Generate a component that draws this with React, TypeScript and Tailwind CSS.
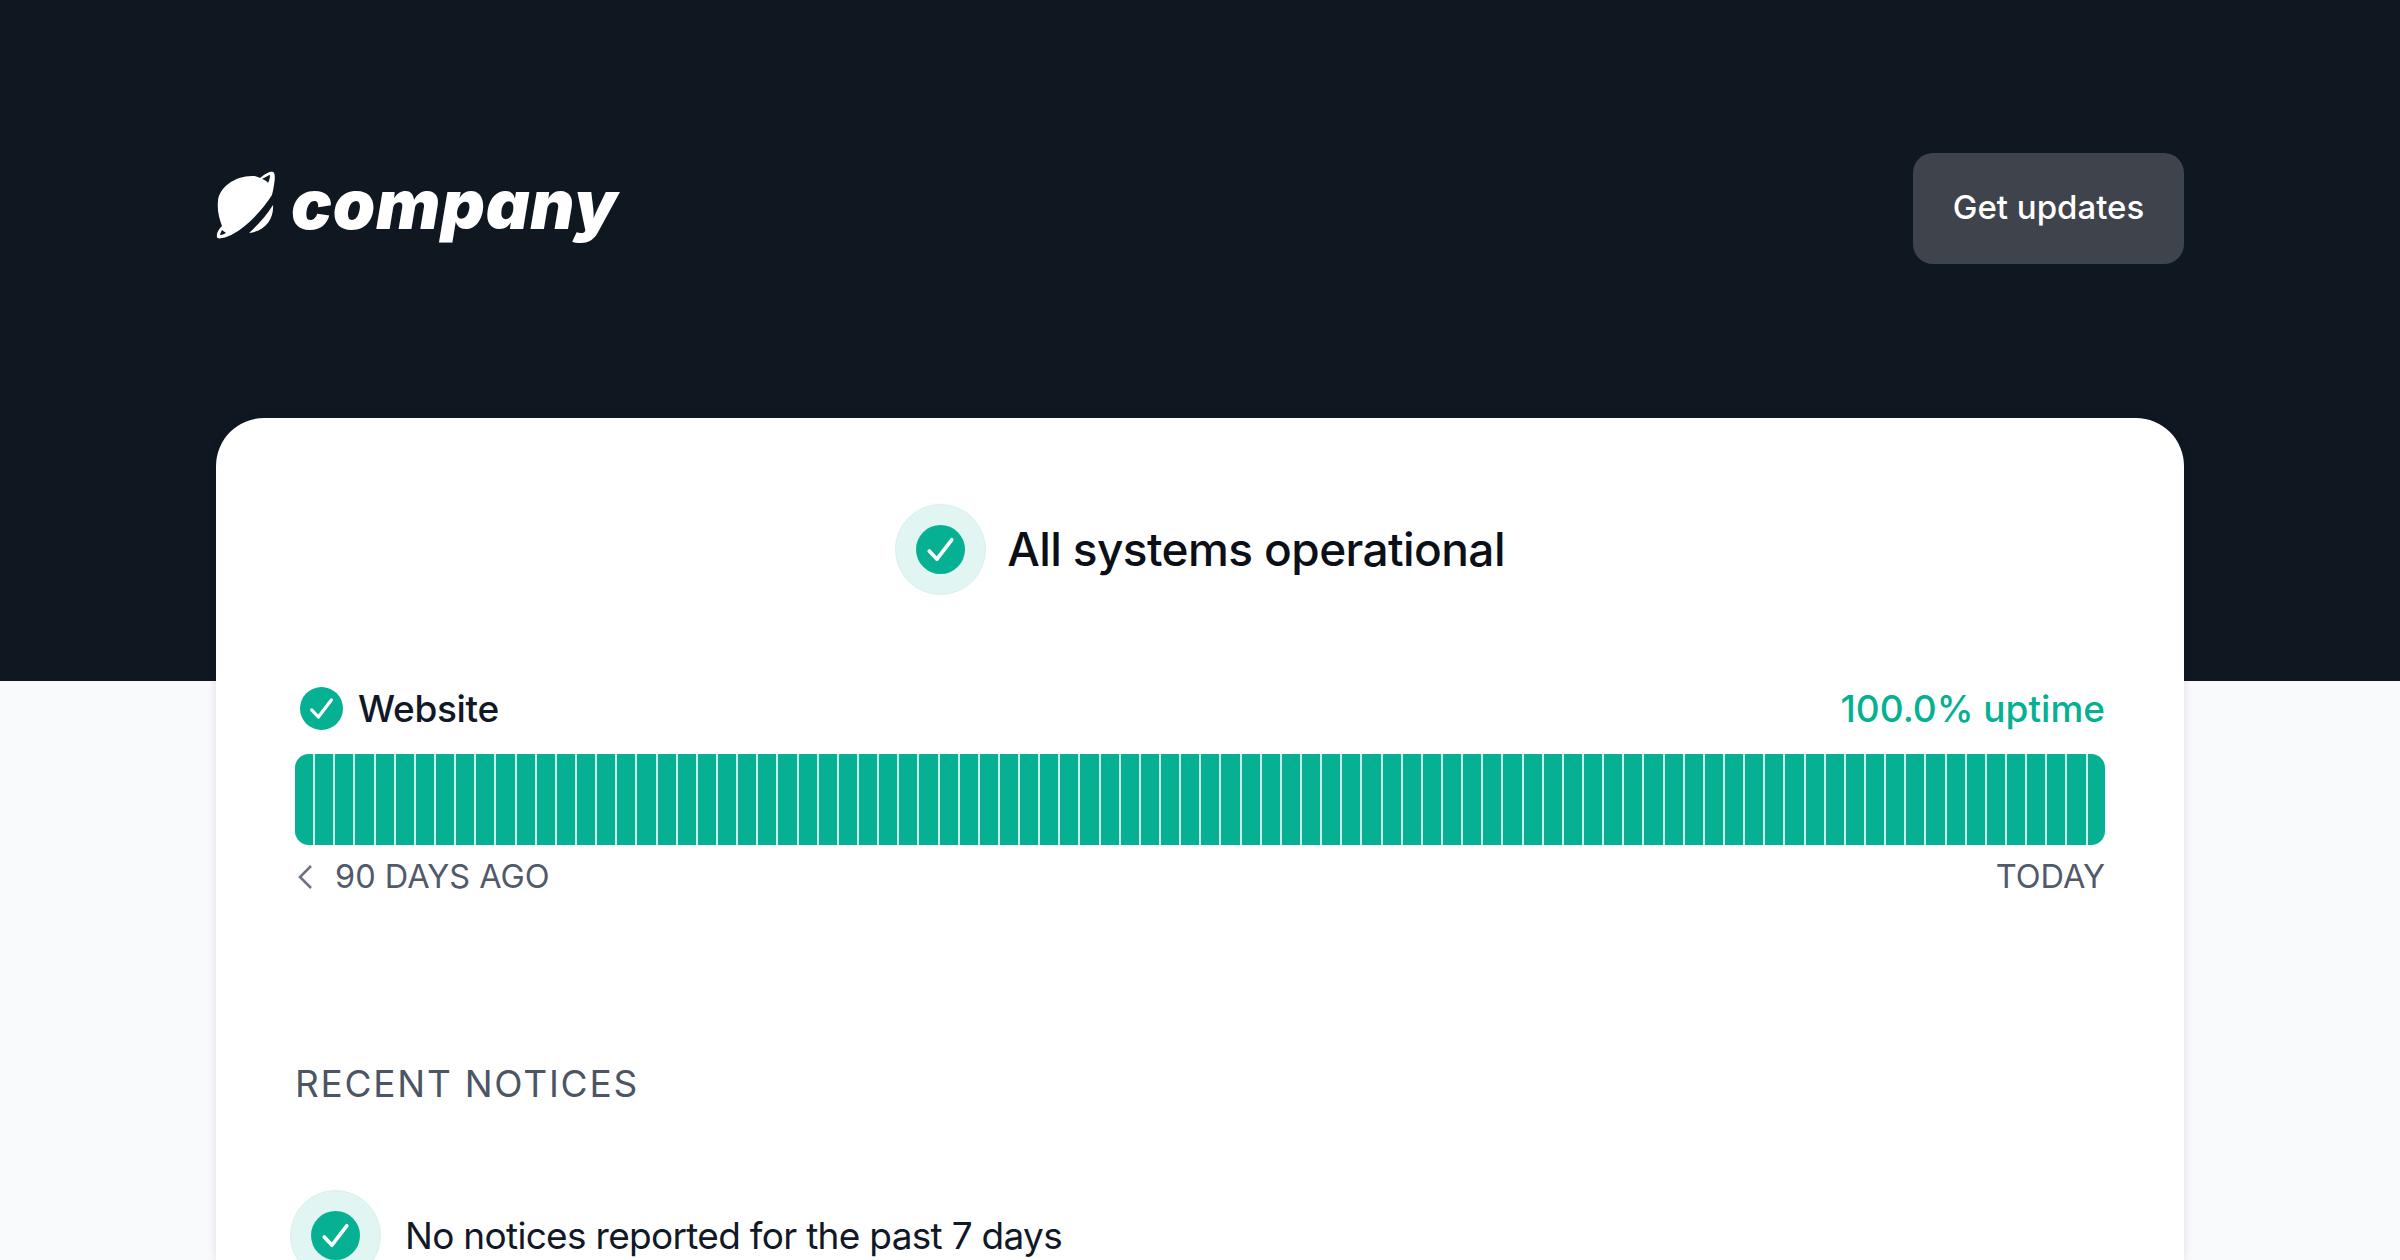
const days = Array.from({ length: 90 }, (_, i) => i);

function Check({ className }: { className: string }) {
  return (
    <svg viewBox="0 0 48 48" className={className}>
      <circle cx="24" cy="24" r="24" fill="#05b192" />
      <path d="M13 25.5l7.5 8L35 14.5" fill="none" stroke="#fff" strokeWidth="3.6" strokeLinecap="round" strokeLinejoin="round" />
    </svg>
  );
}

function Logo() {
  return (
    <div className="flex items-center gap-[15px] mt-[-8px]">
      <svg viewBox="0 0 60 70" className="w-[60px] h-[70px]">
        <path
          fillRule="evenodd"
          d="M44 8C49 4 54 1 57 2c3 1 2 10-1 23C48 38 32 56 17 64c-7 4-16 6-16 3 -1-4 2-8 5-11C3 48 1 40 2 31 3 17 20 5 38 6c2 0 4 1 6 2zM46 9c4-2 7-4 8-4 0 3-1 6-2 8-1-2-3-3-6-4zM6 60c-1 2-2 4-2 5 2 0 4-1 6-2-1-1-3-2-4-3z"
          fill="#fff"
        />
        <path d="M57 35c1 13-7 26-24 28 9-8 17-17 24-28z" fill="#fff" />
      </svg>
      <span className="font-['Inter',sans-serif] font-black italic text-[68px] leading-none tracking-[0.8px] text-white mt-[-2px]">company</span>
    </div>
  );
}

export default function App() {
  return (
    <div className="h-[1260px] overflow-hidden bg-[#f9fafc] font-['Inter',sans-serif]">
      <header className="h-[681px] bg-[#0f1720] px-[216px] pt-[153px]">
        <div className="flex items-center justify-between">
          <Logo />
          <button className="w-[271px] h-[111px] pb-[2px] rounded-[20px] bg-[#3f434b] text-white text-[33px] font-medium">Get updates</button>
        </div>
      </header>

      <main className="relative mx-[216px] mt-[-263px] bg-white rounded-t-[48px] px-[79px] pt-[86px] h-[842px] shadow-[0_0_10px_rgba(17,24,39,0.12)]">
        <div className="flex items-center justify-center gap-[21px]">
          <div className="w-[91px] h-[91px] rounded-full bg-[#e1f5f2] border border-[#d8f1ed] flex items-center justify-center">
            <Check className="w-[49px] h-[49px]" />
          </div>
          <h1 className="text-[46px] font-medium tracking-[-0.6px] text-[#0b0f17]">All systems operational</h1>
        </div>

        <div className="mt-[86px] flex items-center justify-between">
          <div className="flex items-center gap-[15px] pl-[5px]">
            <Check className="w-[43px] h-[43px]" />
            <span className="text-[37px] font-medium tracking-[-0.3px] text-[#111827]">Website</span>
          </div>
          <span className="text-[37px] font-medium text-[#05b192]">100.0% uptime</span>
        </div>

        <div className="mt-[17px] flex h-[91px] rounded-[14px] overflow-hidden gap-[2px] bg-[#cdeee8]">
          {days.map((d) => (
            <div key={d} className="flex-1 bg-[#05b192]" />
          ))}
        </div>

        <div className="mt-[8px] flex items-center justify-between text-[32.5px] text-[#515a6b]">
          <div className="flex items-center gap-[22px] pl-[2px]">
            <svg viewBox="0 0 16 26" className="w-[16px] h-[26px]">
              <path d="M14 2L3 13l11 11" fill="none" stroke="#6b7280" strokeWidth="2.6" />
            </svg>
            <span>90 DAYS AGO</span>
          </div>
          <span>TODAY</span>
        </div>

        <h2 className="mt-[155px] text-[37px] tracking-[1.75px] text-[#4b5563]">RECENT NOTICES</h2>

        <div className="mt-[78px] flex items-center gap-[24px] ml-[-5px]">
          <div className="w-[91px] h-[91px] rounded-full bg-[#e1f5f2] border border-[#d8f1ed] flex items-center justify-center">
            <Check className="w-[49px] h-[49px]" />
          </div>
          <p className="text-[37px] tracking-[-0.7px] text-[#111827]">No notices reported for the past 7 days</p>
        </div>
      </main>
    </div>
  );
}
